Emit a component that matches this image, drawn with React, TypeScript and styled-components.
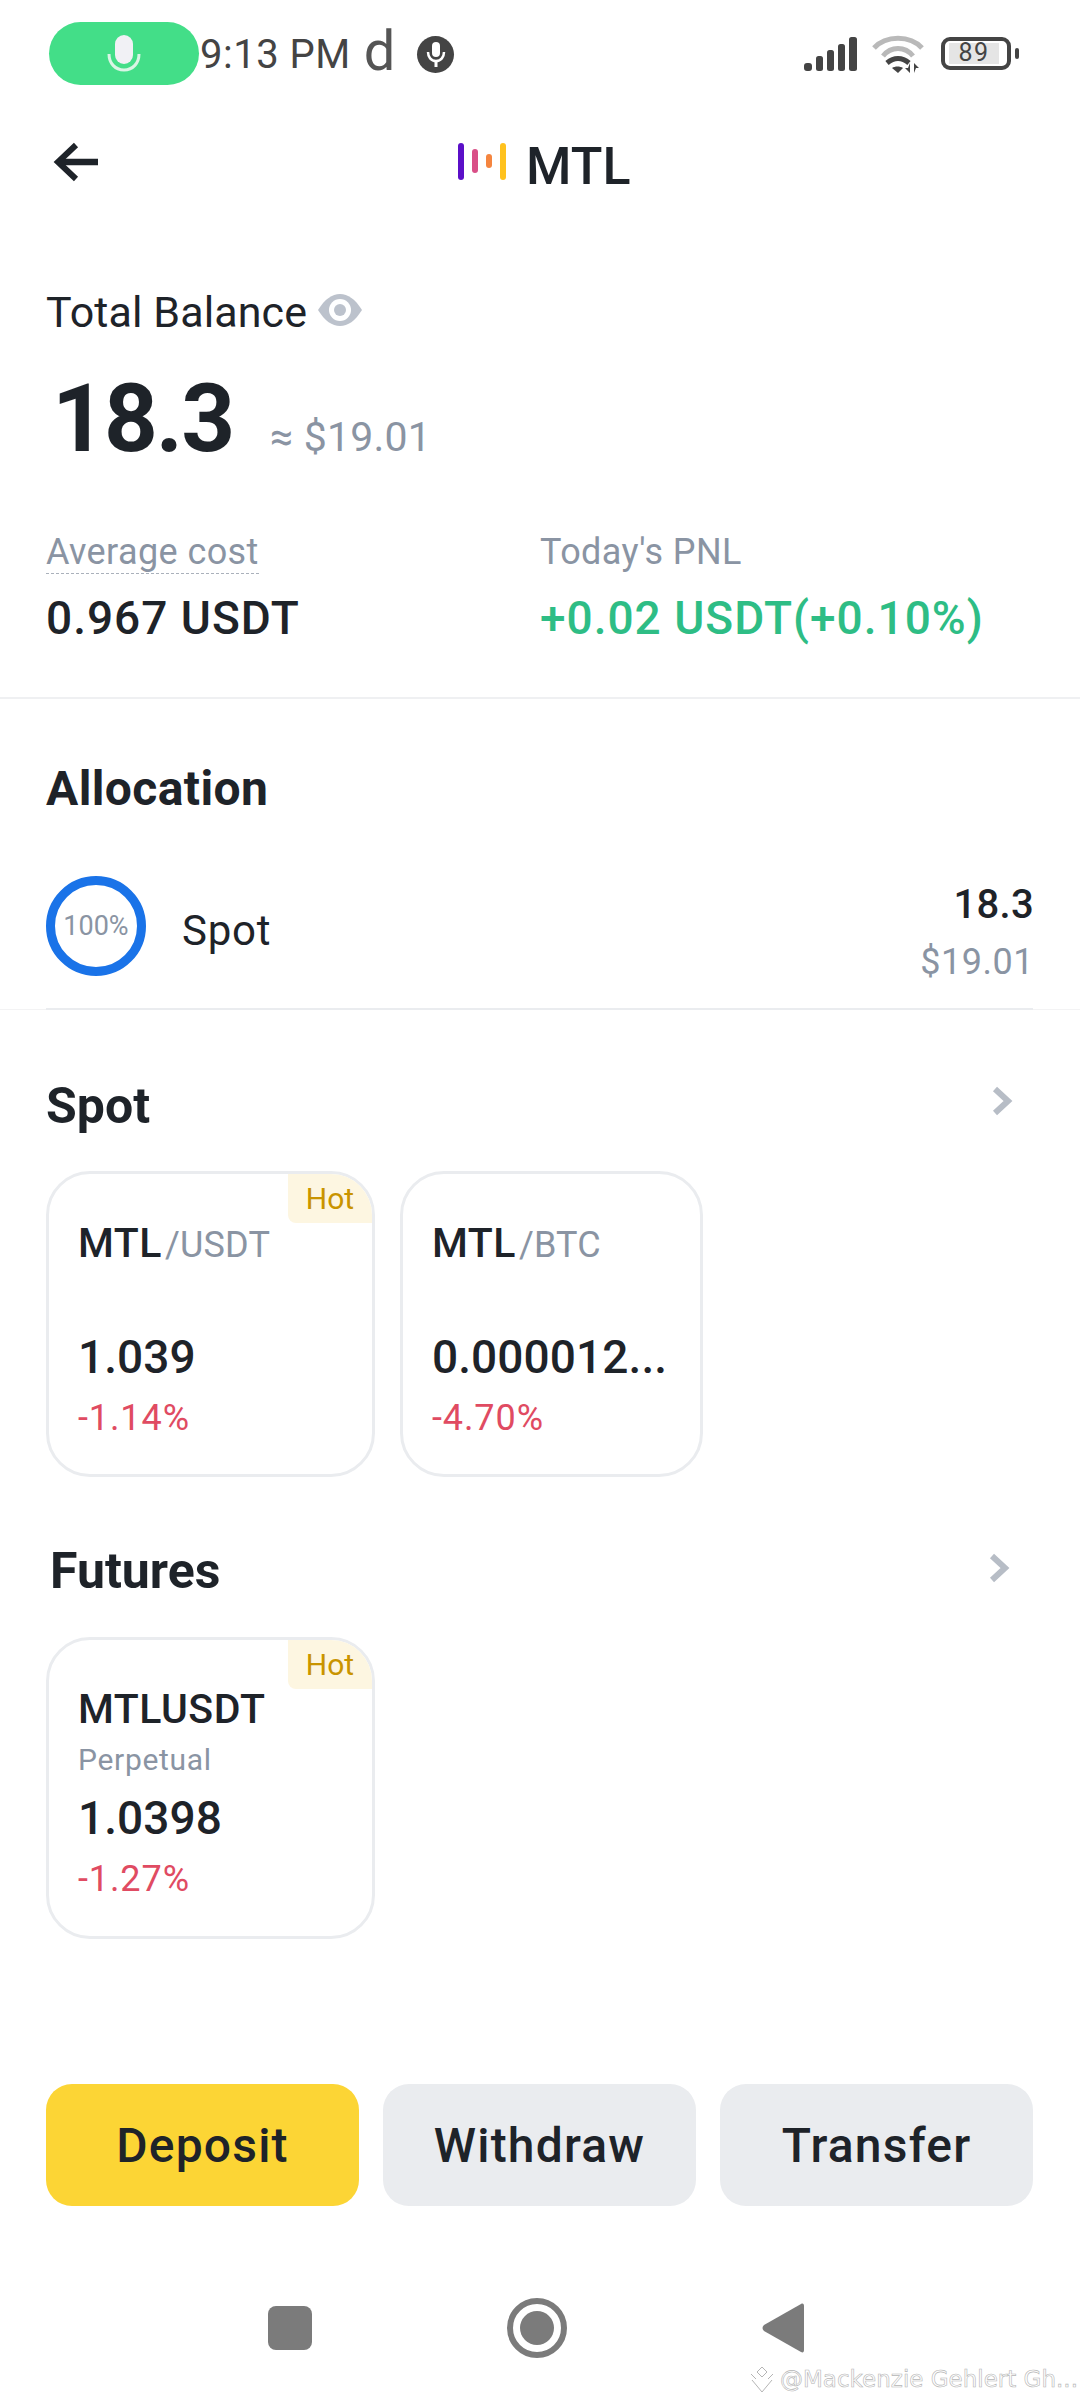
import React from "react";
import styled, { createGlobalStyle } from "styled-components";

const Global = createGlobalStyle`
  html, body { margin: 0; padding: 0; background: #fff; }
  body { font-family: Roboto, "Liberation Sans", sans-serif; color: #1E2329; }
  * { box-sizing: border-box; }
`;

const Page = styled.div`
  position: relative;
  width: 1080px;
  height: 2400px;
  overflow: hidden;
  background: #fff;
`;

const StatusBar = styled.div`
  height: 108px;
  padding: 22px 69px 0 49px;
  display: flex;
  align-items: flex-start;
`;
const MicPill = styled.div`
  width: 150px;
  height: 63px;
  border-radius: 32px;
  background: #43de88;
  display: flex;
  align-items: center;
  justify-content: center;
`;
const Time = styled.div`
  margin-left: 1px;
  height: 63px;
  line-height: 65px;
  font-size: 40px;
  color: #444;
  letter-spacing: 0.5px;
`;
const StatusD = styled.div`
  margin-left: 13px;
  height: 63px;
  line-height: 58px;
  font-size: 56px;
  font-weight: 400;
  color: #555;
`;
const MicBadge = styled.div`
  margin: 14px 0 0 22px;
  width: 37px;
  height: 37px;
  border-radius: 50%;
  background: #444;
  display: flex;
  align-items: center;
  justify-content: center;
`;
const StatusRight = styled.div`
  margin-left: auto;
  display: flex;
  align-items: flex-start;
`;
const Signal = styled.svg`
  margin-top: 15px;
  width: 53px;
  height: 34px;
`;
const Wifi = styled.svg`
  margin: 13px 0 0 15px;
  width: 52px;
  height: 38px;
`;
const Battery = styled.div`
  margin: 15px 0 0 17px;
  width: 70px;
  height: 33px;
  border: 4px solid #444;
  border-radius: 9px;
  padding: 2px 8px 2px 4px;
  position: relative;
  &::after {
    content: "";
    position: absolute;
    top: 7px;
    right: -12px;
    width: 4px;
    height: 11px;
    border-radius: 2px;
    background: #444;
  }
`;
const BatteryFill = styled.div`
  height: 100%;
  background: #e5e5e5;
  text-align: center;
  font-size: 25px;
  line-height: 20px;
  color: #444;
  letter-spacing: 1.5px;
`;

const Header = styled.div`
  height: 108px;
  padding-left: 52px;
  display: flex;
  align-items: center;
`;
const BackIcon = styled.svg`
  width: 50px;
  height: 40px;
`;
const Logo = styled.svg`
  margin-left: 356px;
  width: 50px;
  height: 38px;
`;
const CoinName = styled.div`
  margin-left: 18px;
  margin-top: 9px;
  font-size: 52px;
  font-weight: 500;
  line-height: 60px;
`;

const Balance = styled.div`
  padding: 66px 46px 51px;
`;
const BalanceLabelRow = styled.div`
  display: flex;
  align-items: flex-start;
  height: 60px;
`;
const BalanceLabel = styled.div`
  font-size: 43px;
  line-height: 60px;
  letter-spacing: 0.1px;
`;
const EyeIcon = styled.svg`
  margin: 11px 0 0 10px;
  width: 46px;
  height: 34px;
`;
const AmountRow = styled.div`
  margin-top: 27px;
  padding-left: 6px;
  display: flex;
  align-items: baseline;
  height: 100px;
`;
const Amount = styled.div`
  font-size: 94px;
  font-weight: 700;
  line-height: 100px;
  letter-spacing: -2px;
`;
const AmountFiat = styled.div`
  margin-left: 37px;
  font-size: 41px;
  line-height: 50px;
  color: #8a94a3;
  letter-spacing: 0.2px;
`;
const Stats = styled.div`
  margin-top: 62px;
  display: grid;
  grid-template-columns: 494px 1fr;
`;
const StatLabel = styled.div<{ $dashed?: boolean }>`
  display: inline-block;
  font-size: 36px;
  line-height: 42px;
  color: #8a94a3;
  letter-spacing: 0.4px;
  height: 43px;
  border-bottom: ${(p) => (p.$dashed ? "1px dashed #aab1bb" : "1px solid transparent")};
`;
const StatValue = styled.div<{ $green?: boolean }>`
  margin-top: 16px;
  font-size: 46px;
  font-weight: 500;
  line-height: 56px;
  letter-spacing: 1px;
  color: ${(p) => (p.$green ? "#2ebd85" : "#1E2329")};
`;
const Rule = styled.div`
  height: 2px;
  background: #eff0f2;
`;

const Allocation = styled.div`
  padding: 60px 46px 32px;
`;
const AllocationTitle = styled.div`
  font-size: 48px;
  font-weight: 700;
  line-height: 60px;
  letter-spacing: 0.4px;
`;
const AllocationRow = styled.div`
  margin-top: 57px;
  height: 100px;
  display: flex;
  align-items: flex-start;
`;
const Ring = styled.div`
  width: 100px;
  height: 100px;
  border-radius: 50%;
  border: 9px solid #1a73e8;
  display: flex;
  align-items: center;
  justify-content: center;
  font-size: 27px;
  color: #8a94a3;
`;
const AllocationName = styled.div`
  margin: 30px 0 0 36px;
  font-size: 42px;
  line-height: 50px;
  letter-spacing: 0.8px;
`;
const AllocationValues = styled.div`
  margin-left: auto;
  margin-top: 4px;
  text-align: right;
`;
const AllocationAmount = styled.div`
  font-size: 40px;
  font-weight: 500;
  line-height: 50px;
  letter-spacing: 0.3px;
`;
const AllocationFiat = styled.div`
  margin-top: 10px;
  font-size: 36px;
  line-height: 44px;
  color: #8a94a3;
  letter-spacing: 0.5px;
`;
const RuleTrack = styled.div`
  height: 2px;
  border-bottom: 1px solid #f3f3f4;
`;
const InsetRule = styled.div`
  margin-left: 46px;
  width: 987px;
  height: 2px;
  background: #eaecef;
`;

const Market = styled.div`
  padding-left: 46px;
  padding-right: 46px;
`;
const MarketHead = styled.div<{ $top: number; $shift?: number }>`
  margin-top: ${(p) => p.$top}px;
  padding-left: ${(p) => p.$shift || 0}px;
  display: flex;
  align-items: flex-start;
  height: 56px;
`;
const MarketTitle = styled.div`
  font-size: 50px;
  font-weight: 700;
  line-height: 56px;
`;
const Chevron = styled.svg<{ $right: number; $top: number }>`
  margin-left: auto;
  margin-right: ${(p) => p.$right}px;
  margin-top: ${(p) => p.$top}px;
  width: 22px;
  height: 30px;
`;
const CardRow = styled.div<{ $top: number }>`
  margin-top: ${(p) => p.$top}px;
  display: flex;
  gap: 25px;
`;
const Card = styled.div<{ $w: number; $h: number }>`
  position: relative;
  width: ${(p) => p.$w}px;
  height: ${(p) => p.$h}px;
  border: 3px solid #eaecef;
  border-radius: 44px;
  padding: 44px 6px 0 29px;
  overflow: hidden;
`;
const HotTag = styled.div`
  position: absolute;
  top: 0;
  right: 0;
  width: 84px;
  height: 49px;
  background: #fdf6e1;
  border-bottom-left-radius: 8px;
  color: #c99400;
  font-size: 30px;
  line-height: 50px;
  text-align: center;
`;
const PairLine = styled.div`
  font-size: 41px;
  font-weight: 500;
  line-height: 50px;
  letter-spacing: 0.5px;
`;
const PairQuote = styled.span`
  margin-left: 3px;
  font-size: 36px;
  font-weight: 400;
  color: #8a94a3;
  letter-spacing: 0.2px;
`;
const Perpetual = styled.div`
  margin-top: 8px;
  font-size: 30px;
  line-height: 36px;
  color: #8a94a3;
  letter-spacing: 0.7px;
`;
const Price = styled.div<{ $top: number }>`
  margin-top: ${(p) => p.$top}px;
  font-size: 46px;
  font-weight: 500;
  line-height: 56px;
  letter-spacing: 0.1px;
`;
const Change = styled.div<{ $top: number }>`
  margin-top: ${(p) => p.$top}px;
  font-size: 36px;
  line-height: 44px;
  color: #e04b62;
  letter-spacing: 0.9px;
`;

const Actions = styled.div`
  margin-top: 145px;
  padding: 0 46px;
  display: grid;
  grid-template-columns: repeat(3, 313px);
  column-gap: 24px;
`;
const ActionButton = styled.div<{ $primary?: boolean }>`
  height: 122px;
  border-radius: 26px;
  background: ${(p) => (p.$primary ? "#fcd535" : "#eaecef")};
  display: flex;
  align-items: center;
  justify-content: center;
  font-size: 48px;
  font-weight: 500;
  color: #1e2329;
  letter-spacing: 1.2px;
`;

const NavBar = styled.div`
  margin-top: 92px;
  height: 60px;
  padding-left: 268px;
  display: flex;
  align-items: center;
`;
const NavSquare = styled.div`
  width: 44px;
  height: 44px;
  border-radius: 8px;
  background: #7b7b7b;
`;
const NavHome = styled.div`
  margin-left: 195px;
  width: 60px;
  height: 60px;
  border-radius: 50%;
  border: 6px solid #7b7b7b;
  padding: 7px;
  &::after {
    content: "";
    display: block;
    width: 100%;
    height: 100%;
    border-radius: 50%;
    background: #7b7b7b;
  }
`;
const NavBack = styled.svg`
  margin-left: 195px;
  width: 42px;
  height: 50px;
`;

const Watermark = styled.div`
  position: absolute;
  left: 748px;
  top: 2364px;
  display: flex;
  align-items: center;
  gap: 4px;
  font-family: "DejaVu Sans", sans-serif;
  font-size: 23px;
  line-height: 30px;
  color: #fff;
  -webkit-text-stroke: 0.6px #b5b5b5;
  white-space: nowrap;
`;
const WatermarkMark = styled.svg`
  width: 28px;
  height: 28px;
`;

export default function App() {
  return (
    <Page>
      <Global />
      <StatusBar>
        <MicPill>
          <svg width="34" height="38" viewBox="0 0 34 38">
            <rect x="8" y="0" width="18" height="29" rx="9" fill="#f1f1f5" />
            <path d="M2 19c0 9 6 16 15 16s15-7 15-16" fill="none" stroke="#d9f5e5" strokeWidth="3" />
          </svg>
        </MicPill>
        <Time>9:13 PM</Time>
        <StatusD>d</StatusD>
        <MicBadge>
          <svg width="22" height="28" viewBox="0 0 22 28">
            <rect x="7" y="1" width="8" height="15" rx="4" fill="#fff" />
            <path d="M3 11c0 5 3 9 8 9s8-4 8-9" fill="none" stroke="#fff" strokeWidth="2.5" />
            <rect x="9.5" y="19" width="3" height="7" fill="#fff" />
          </svg>
        </MicBadge>
        <StatusRight>
          <Signal viewBox="0 0 53 34">
            <g fill="#444">
              <rect x="0" y="26" width="8" height="8" rx="3" />
              <rect x="12" y="19" width="7" height="15" rx="2.5" />
              <rect x="23" y="13" width="7" height="21" rx="2.5" />
              <rect x="34" y="7" width="7" height="27" rx="2.5" />
              <rect x="45" y="0" width="8" height="34" rx="2.5" />
            </g>
          </Signal>
          <Wifi viewBox="0 0 52 38">
            <path d="M2 13C14 0 38 0 50 13" fill="none" stroke="#b9b9b9" strokeWidth="5" />
            <path d="M11 21C19 11 33 11 41 21" fill="none" stroke="#b9b9b9" strokeWidth="5" />
            <path d="M15 28c7-6 15-6 22 0" fill="none" stroke="#444" strokeWidth="5" />
            <path d="M20 33l6 5 5-5c-3-2-8-2-11 0z" fill="#444" />
            <path d="M38 28v10l-5-5h3zM42 38V28l5 5h-3z" fill="#444" />
          </Wifi>
          <Battery>
            <BatteryFill>89</BatteryFill>
          </Battery>
        </StatusRight>
      </StatusBar>

      <Header>
        <BackIcon viewBox="0 0 50 40">
          <path d="M24 3L6 20l18 17" fill="none" stroke="#1e2329" strokeWidth="6" />
          <path d="M6 20h40" fill="none" stroke="#1e2329" strokeWidth="6.5" />
        </BackIcon>
        <Logo viewBox="0 0 50 38">
          <rect x="0" y="0" width="6" height="37" rx="3" fill="#5b0fc8" />
          <rect x="14" y="6" width="6" height="24" rx="3" fill="#d94f87" />
          <rect x="28" y="11" width="6" height="14" rx="3" fill="#f5853f" />
          <rect x="42" y="0" width="6" height="37" rx="3" fill="#ffc21e" />
        </Logo>
        <CoinName>MTL</CoinName>
      </Header>

      <Balance>
        <BalanceLabelRow>
          <BalanceLabel>Total Balance</BalanceLabel>
          <EyeIcon viewBox="0 0 46 34">
            <path d="M1 17C8 6 15 1 23 1s15 5 22 16c-7 11-14 16-22 16S8 28 1 17z" fill="#bcc2cc" />
            <circle cx="23" cy="17" r="11" fill="#fff" />
            <circle cx="23" cy="17" r="6" fill="#bcc2cc" />
          </EyeIcon>
        </BalanceLabelRow>
        <AmountRow>
          <Amount>18.3</Amount>
          <AmountFiat>≈ $19.01</AmountFiat>
        </AmountRow>
        <Stats>
          <div>
            <StatLabel $dashed>Average cost</StatLabel>
            <StatValue>0.967 USDT</StatValue>
          </div>
          <div>
            <StatLabel>Today's PNL</StatLabel>
            <StatValue $green>+0.02 USDT(+0.10%)</StatValue>
          </div>
        </Stats>
      </Balance>
      <Rule />

      <Allocation>
        <AllocationTitle>Allocation</AllocationTitle>
        <AllocationRow>
          <Ring>100%</Ring>
          <AllocationName>Spot</AllocationName>
          <AllocationValues>
            <AllocationAmount>18.3</AllocationAmount>
            <AllocationFiat>$19.01</AllocationFiat>
          </AllocationValues>
        </AllocationRow>
      </Allocation>
      <RuleTrack>
        <InsetRule />
      </RuleTrack>

      <Market>
        <MarketHead $top={68}>
          <MarketTitle>Spot</MarketTitle>
          <Chevron $top={8} $right={20} viewBox="0 0 22 30">
            <path d="M3 3l13 12L3 27" fill="none" stroke="#b7bdc6" strokeWidth="6" />
          </Chevron>
        </MarketHead>
        <CardRow $top={37}>
          <Card $w={329} $h={306}>
            <HotTag>Hot</HotTag>
            <PairLine>
              MTL<PairQuote>/USDT</PairQuote>
            </PairLine>
            <Price $top={59}>1.039</Price>
            <Change $top={11}>-1.14%</Change>
          </Card>
          <Card $w={303} $h={306}>
            <PairLine>
              MTL<PairQuote>/BTC</PairQuote>
            </PairLine>
            <Price $top={59}>0.000012...</Price>
            <Change $top={11}>-4.70%</Change>
          </Card>
        </CardRow>
        <MarketHead $top={66} $shift={4}>
          <MarketTitle>Futures</MarketTitle>
          <Chevron $top={10} $right={23} viewBox="0 0 22 30">
            <path d="M3 3l13 12L3 27" fill="none" stroke="#b7bdc6" strokeWidth="6" />
          </Chevron>
        </MarketHead>
        <CardRow $top={38}>
          <Card $w={329} $h={302}>
            <HotTag>Hot</HotTag>
            <PairLine>MTLUSDT</PairLine>
            <Perpetual>Perpetual</Perpetual>
            <Price $top={12}>1.0398</Price>
            <Change $top={11}>-1.27%</Change>
          </Card>
        </CardRow>
      </Market>

      <Actions>
        <ActionButton $primary>Deposit</ActionButton>
        <ActionButton>Withdraw</ActionButton>
        <ActionButton>Transfer</ActionButton>
      </Actions>

      <NavBar>
        <NavSquare />
        <NavHome />
        <NavBack viewBox="0 0 42 50">
          <path d="M39 1c2-1 3 0 3 2v44c0 2-1 3-3 2L2 28c-2-2-2-4 0-6z" fill="#7b7b7b" />
        </NavBack>
      </NavBar>

      <Watermark>
        <WatermarkMark viewBox="0 0 28 28">
          <path d="M14 2l5 5-5 5-5-5zM3 9l5 5M25 9l-5 5M4 15l10 12 10-12" fill="none" stroke="#b5b5b5" strokeWidth="1" />
        </WatermarkMark>
        @Mackenzie Gehlert Gh...
      </Watermark>
    </Page>
  );
}
